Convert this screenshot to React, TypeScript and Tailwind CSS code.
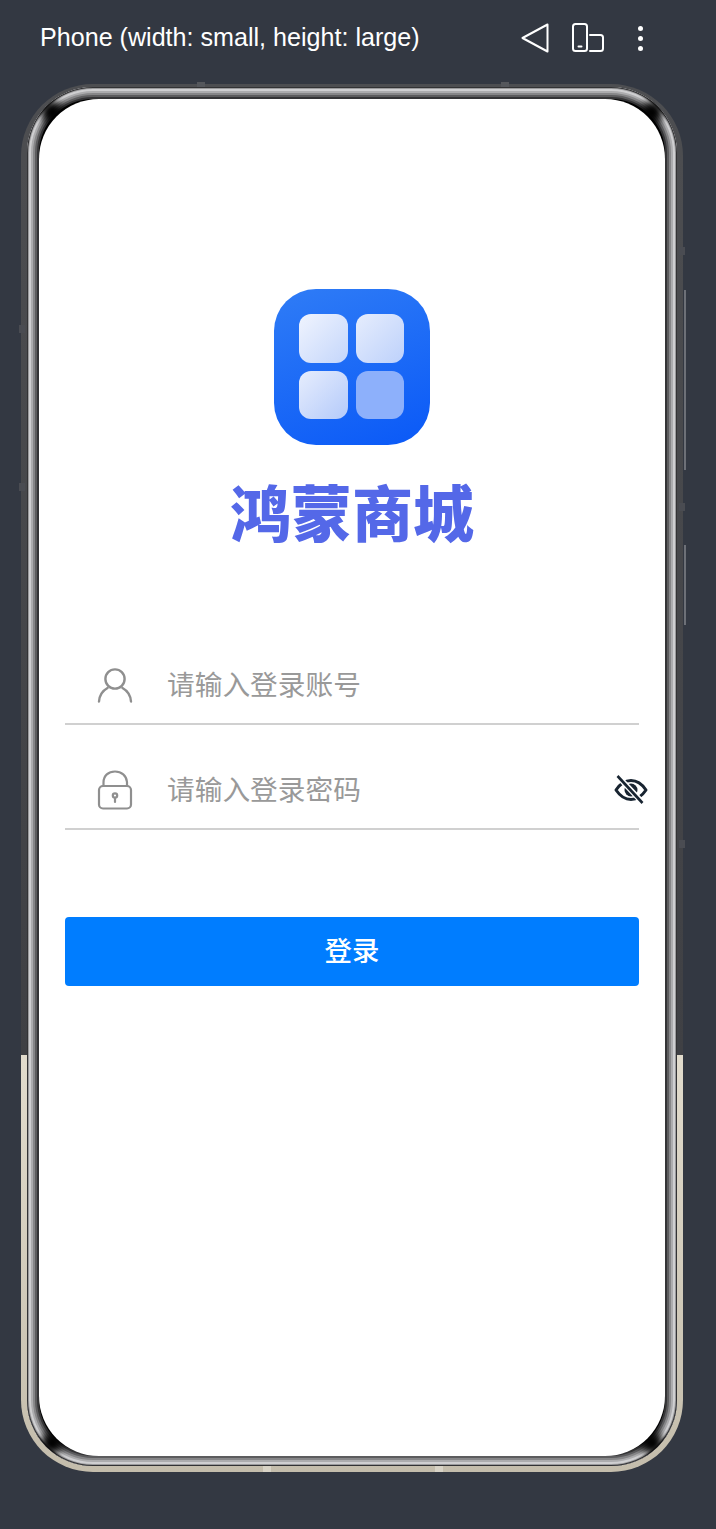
const cjk = "font-['Roboto','Noto_Sans_CJK_SC',sans-serif]";

function BackIcon() {
  return (
    <svg width="28" height="30" viewBox="0 0 28 30" fill="none" stroke="white" strokeWidth="2" strokeLinejoin="round">
      <path d="M26.5 1.5 L1.5 15 L26.5 28.5 Z" />
    </svg>
  );
}

function RotateIcon() {
  return (
    <svg width="32" height="30" viewBox="0 0 32 30" fill="none" stroke="white" strokeWidth="2" strokeLinecap="round">
      <rect x="1" y="1" width="14" height="27" rx="2.5" />
      <path d="M6.5 23.5 H9.5" />
      <path d="M18 12 H28.5 Q31 12 31 14.5 V25.5 Q31 28 28.5 28 H18" />
    </svg>
  );
}

function UserIcon() {
  return (
    <svg width="36" height="36" viewBox="0 0 36 36" fill="none" stroke="#8f8f8f" strokeWidth="2.4" strokeLinecap="round">
      <circle cx="18" cy="12" r="9.6" />
      <path d="M2 34.5 C2.5 27.5 6 23.5 10.5 21" />
      <path d="M34 34.5 C33.5 27.5 30 23.5 25.5 21" />
    </svg>
  );
}

function LockIcon() {
  return (
    <svg width="36" height="40" viewBox="0 0 36 40" fill="none" stroke="#8f8f8f" strokeWidth="2.2" strokeLinecap="round">
      <path d="M6.5 16 V12.5 C6.5 5.5 11.5 1.5 18 1.5 C24.5 1.5 29.5 5.5 30 12 V16" />
      <rect x="2" y="16" width="32" height="22.5" rx="4" />
      <circle cx="18" cy="25.5" r="2.2" />
      <path d="M18 28 V32" />
    </svg>
  );
}

function EyeOffIcon() {
  return (
    <svg width="34" height="30" viewBox="0 0 34 30" fill="none" stroke="#182431">
      <path d="M2 15 C7 7.5 12 5.5 17 5.5 C22 5.5 27 7.5 32 15 C27 22.5 22 24.5 17 24.5 C12 24.5 7 22.5 2 15 Z" strokeWidth="3" strokeLinejoin="round" />
      <circle cx="17" cy="15" r="6.5" fill="#182431" stroke="none" />
      <path d="M4 1.5 L29 28" stroke="white" strokeWidth="5.5" />
      <path d="M3.5 1 L28.5 28" strokeWidth="2.6" />
    </svg>
  );
}

function Logo() {
  return (
    <div className="w-[156px] h-[156px] rounded-[42px] bg-[linear-gradient(160deg,#2f7cf6,#0a59f7)] pt-[25px] pl-[25px]">
      <div className="grid grid-cols-[48.5px_48.5px] grid-rows-[48.5px_48.5px] gap-x-[8px] gap-y-[8px]">
        <div className="rounded-[12px] bg-[linear-gradient(135deg,#f0f4fe,#c4d6fb)]" />
        <div className="rounded-[12px] bg-[linear-gradient(135deg,#e6edfd,#bdd1fb)]" />
        <div className="rounded-[12px] bg-[linear-gradient(135deg,#e6edfd,#b4cafa)]" />
        <div className="rounded-[12px] bg-[#8db0fb]" />
      </div>
    </div>
  );
}

function Field({ icon, placeholder, trailing }: { icon: React.ReactNode; placeholder: string; trailing?: React.ReactNode }) {
  return (
    <div className="relative flex items-center h-[105px] pt-[26px] border-b-2 border-[#d0d0d0]">
      <div className="w-[36px] ml-[32px] flex justify-center">{icon}</div>
      <span className={`ml-[34px] mt-[2px] text-[27.7px] text-[#999999] ${cjk}`}>{placeholder}</span>
      {trailing}
    </div>
  );
}

export default function App() {
  return (
    <div className="w-[716px] h-[1529px] bg-[#333842] overflow-hidden">
      <header className="h-[84px] pb-[8px] pl-[40px] pr-[73px] flex items-center">
        <span className="text-white text-[25.12px] font-['Liberation_Sans',sans-serif] leading-none">
          Phone (width: small, height: large)
        </span>
        <div className="ml-auto flex items-center gap-[23px]">
          <BackIcon />
          <RotateIcon />
          <div className="ml-[11px] flex flex-col gap-[5px]">
            <span className="w-[5px] h-[5px] rounded-full bg-white" />
            <span className="w-[5px] h-[5px] rounded-full bg-white" />
            <span className="w-[5px] h-[5px] rounded-full bg-white" />
          </div>
        </div>
      </header>

      <div className="relative ml-[21px] w-[662px] h-[1388px] rounded-[72px] pt-[3px] pb-[6px] px-[6px] bg-[linear-gradient(to_bottom,#4d4e51_0,#3f4044_971px,#e2dccd_971px,#c4bdac_100%)]">
        {/* buttons and antenna marks */}
        <div className="absolute left-[663px] top-[206px] w-[2px] h-[180px] bg-[#6d7077]" />
        <div className="absolute left-[663px] top-[461px] w-[2px] h-[80px] bg-[#6d7077]" />
        <div className="absolute left-[176px] -top-[2px] w-[8px] h-[6px] bg-[#55575c]" />
        <div className="absolute left-[480px] -top-[2px] w-[8px] h-[6px] bg-[#55575c]" />
        <div className="absolute -left-[2px] top-[241px] w-[6px] h-[8px] bg-[#4a4c52]" />
        <div className="absolute -left-[2px] top-[399px] w-[6px] h-[8px] bg-[#4a4c52]" />
        <div className="absolute -right-[2px] top-[163px] w-[6px] h-[8px] bg-[#4a4c52]" />
        <div className="absolute -right-[2px] top-[419px] w-[6px] h-[8px] bg-[#4a4c52]" />
        <div className="absolute -right-[2px] top-[756px] w-[6px] h-[8px] bg-[#4a4c52]" />
        <div className="absolute left-[242px] bottom-0 w-[8px] h-[6px] bg-[#d8d3c6]" />
        <div className="absolute left-[414px] bottom-0 w-[8px] h-[6px] bg-[#d8d3c6]" />

        <div className="relative h-full overflow-hidden rounded-[66px] bg-black pt-[12px] pb-[10px] px-[12px] shadow-[inset_0_0_0_1px_#333335,inset_0_0_0_2px_#9a9a9c,inset_0_0_0_4px_#cfcfd1,inset_0_0_0_6px_#acacae,inset_0_0_0_8px_#868688,inset_0_0_0_10px_#5c5c5e,inset_0_0_0_12px_#343436]">
          {/* dark shading where the bezel turns the corners */}
          <div className="absolute left-[14px] top-[14px] w-[22px] h-[22px] rounded-full bg-black blur-[4px]" />
          <div className="absolute right-[14px] top-[14px] w-[22px] h-[22px] rounded-full bg-black blur-[4px]" />
          <div className="absolute left-[14px] bottom-[12px] w-[22px] h-[22px] rounded-full bg-black blur-[4px]" />
          <div className="absolute right-[14px] bottom-[12px] w-[22px] h-[22px] rounded-full bg-black blur-[4px]" />

          <main className="relative z-10 h-full rounded-[60px] bg-white overflow-hidden flex flex-col items-center">
            <div className="mt-[190px]">
              <Logo />
            </div>
            <h1 className="mt-[30px] h-[73px] text-[61px] leading-[72px] font-black text-[#5468e8] font-['Noto_Sans_CJK_SC',sans-serif]">
              鸿蒙商城
            </h1>
            <div className="w-[574px] mt-[72px]">
              <Field icon={<UserIcon />} placeholder="请输入登录账号" />
              <Field
                icon={<LockIcon />}
                placeholder="请输入登录密码"
                trailing={
                  <div className="ml-auto -mr-[9px]">
                    <EyeOffIcon />
                  </div>
                }
              />
              <button className={`mt-[87px] w-full h-[69px] pt-[2px] rounded-[4px] bg-[#007dff] text-white text-[27.4px] font-medium ${cjk}`}>
                登录
              </button>
            </div>
          </main>
        </div>
      </div>
    </div>
  );
}
